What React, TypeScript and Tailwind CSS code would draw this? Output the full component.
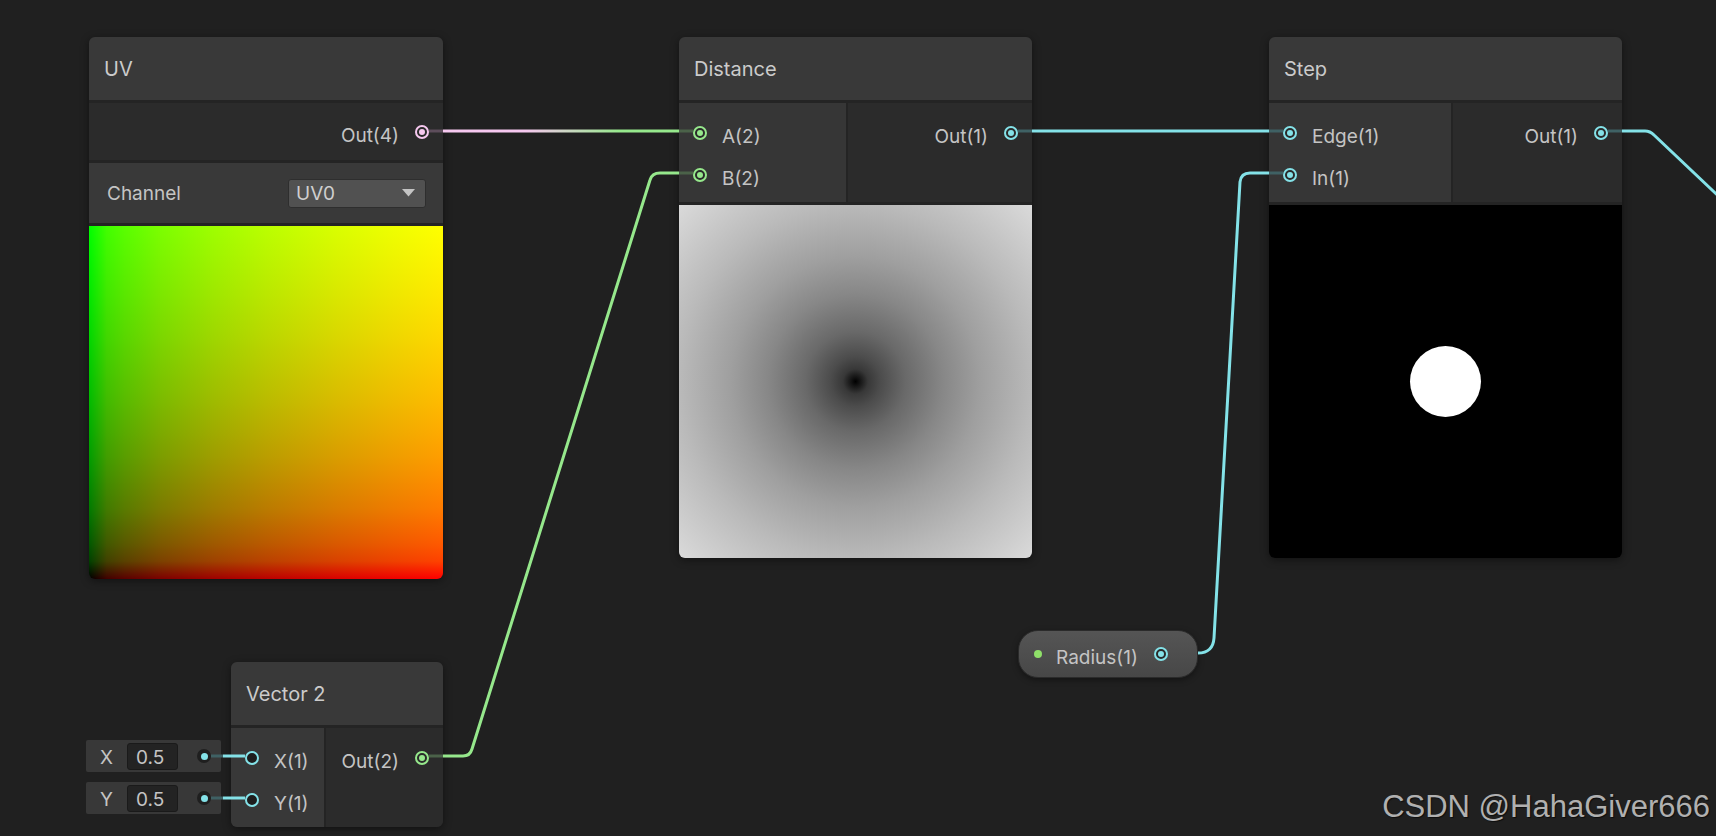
import React from "react";

const PINK = "#f6c8ef";
const GREEN = "#96e88c";
const CYAN = "#84e2e8";

type PortKind = "filled" | "hollow";

function Port({ color, kind = "filled" }: { color: "pink" | "green" | "cyan"; kind?: PortKind }) {
  const border =
    color === "pink" ? "border-[#f6c8ef]" : color === "green" ? "border-[#96e88c]" : "border-[#84e2e8]";
  const dot = color === "pink" ? "bg-[#f6c8ef]" : color === "green" ? "bg-[#96e88c]" : "bg-[#84e2e8]";
  return (
    <span
      className={`flex h-[14px] w-[14px] shrink-0 items-center justify-center rounded-full border-2 ${border} ${
        kind === "hollow" ? "bg-[#1e1e1e]" : "bg-[#2a2a2a]"
      }`}
    >
      {kind === "filled" && <span className={`h-[6px] w-[6px] rounded-full ${dot}`} />}
    </span>
  );
}

function InRow({ label, color, kind }: { label: string; color: "green" | "cyan"; kind?: PortKind }) {
  return (
    <div className="flex h-[42px] items-center gap-[15px] pl-[14px]">
      <Port color={color} kind={kind} />
      <span className="pt-[9px]">{label}</span>
    </div>
  );
}

function OutRow({ label, color }: { label: string; color: "pink" | "green" | "cyan" }) {
  return (
    <div className="flex h-[42px] items-center justify-end gap-[16px] pr-[14px]">
      <span className="pt-[9px]">{label}</span>
      <Port color={color} />
    </div>
  );
}

function Header({ title }: { title: string }) {
  return (
    <div className="flex h-[63px] items-center rounded-t-[6px] bg-[#393939] pl-[15px] text-[20px] text-[#cbcbcb]">
      {title}
    </div>
  );
}

function Field({ label }: { label: string }) {
  return (
    <div className="flex h-[32px] w-[135px] items-center rounded-[2px] bg-[#383838] text-[19px] text-[#c4c4c4]">
      <span className="w-[41px] pt-[5px] text-center">{label}</span>
      <span className="flex h-[27px] w-[51px] items-center rounded-[3px] border border-[#1a1a1a] bg-[#232323] pl-[8px] pt-[5px]">
        0.5
      </span>
      <span className="ml-auto mr-[10px] flex h-[14px] w-[14px] items-center justify-center rounded-full bg-[#1f1f1f]">
        <span className="h-[7px] w-[7px] rounded-full bg-[#84e2e8]" />
      </span>
    </div>
  );
}

export default function App() {
  return (
    <div className="relative h-[836px] w-[1716px] overflow-hidden bg-[#202020] font-['Inter','Noto_Sans',sans-serif] text-[19px] text-[#c4c4c4]">
      {/* UV node */}
      <div className="absolute left-[89px] top-[37px] flex w-[354px] flex-col gap-[3px] rounded-[6px] bg-[#242424] shadow-[0_2px_8px_rgba(0,0,0,0.45)]">
        <Header title="UV" />
        <div className="flex h-[57px] items-center justify-end gap-[16px] bg-[#2b2b2b] pr-[14px]">
          <span className="pt-[9px]">Out(4)</span>
          <Port color="pink" />
        </div>
        <div className="flex h-[60px] items-center justify-between bg-[#393939] pl-[18px] pr-[17px]">
          <span className="pt-[2px]">Channel</span>
          <div className="flex h-[29px] w-[138px] items-center justify-between rounded-[3px] border border-[#2e2e2e] bg-[#515151] pl-[7px] pr-[10px] text-[#cfcfcf]">
            <span className="pt-[2px]">UV0</span>
            <svg width="13" height="8" viewBox="0 0 13 8">
              <path d="M0 0 H13 L6.5 7.5 Z" fill="#c4c4c4" />
            </svg>
          </div>
        </div>
        <div className="h-[353px] rounded-b-[6px] bg-blend-screen bg-[image:linear-gradient(to_right,#000000_0%,#410000_5%,#590000_10%,#7b0000_20%,#9e0000_35%,#ba0000_50%,#d90000_70%,#ed0000_85%,#ff0000_100%),linear-gradient(to_top,#000000_0%,#004100_5%,#005900_10%,#007b00_20%,#009e00_35%,#00ba00_50%,#00d900_70%,#00ed00_85%,#00ff00_100%)]" />
      </div>

      {/* Distance node */}
      <div className="absolute left-[679px] top-[37px] flex w-[353px] flex-col gap-[3px] rounded-[6px] bg-[#242424] shadow-[0_2px_8px_rgba(0,0,0,0.45)]">
        <Header title="Distance" />
        <div className="flex h-[99px] gap-[2px]">
          <div className="flex w-[167px] flex-col bg-[#363636] pt-[9px]">
            <InRow label="A(2)" color="green" />
            <InRow label="B(2)" color="green" />
          </div>
          <div className="flex flex-1 flex-col bg-[#2b2b2b] pt-[9px]">
            <OutRow label="Out(1)" color="cyan" />
          </div>
        </div>
        <div className="h-[353px] rounded-b-[6px] bg-[radial-gradient(circle_farthest-corner_at_center,#000000_0%,#383838_5%,#4c4c4c_10%,#696969_20%,#878787_35%,#9f9f9f_50%,#bababa_71%,#dadada_100%)]" />
      </div>

      {/* Step node */}
      <div className="absolute left-[1269px] top-[37px] flex w-[353px] flex-col gap-[3px] rounded-[6px] bg-[#242424] shadow-[0_2px_8px_rgba(0,0,0,0.45)]">
        <Header title="Step" />
        <div className="flex h-[99px] gap-[2px]">
          <div className="flex w-[182px] flex-col bg-[#363636] pt-[9px]">
            <InRow label="Edge(1)" color="cyan" />
            <InRow label="In(1)" color="cyan" />
          </div>
          <div className="flex flex-1 flex-col bg-[#2b2b2b] pt-[9px]">
            <OutRow label="Out(1)" color="cyan" />
          </div>
        </div>
        <div className="flex h-[353px] items-center justify-center rounded-b-[6px] bg-black">
          <div className="h-[71px] w-[71px] rounded-full bg-white" />
        </div>
      </div>

      {/* Vector 2 node */}
      <div className="absolute left-[231px] top-[662px] flex w-[212px] flex-col gap-[3px] rounded-[6px] bg-[#242424] shadow-[0_2px_8px_rgba(0,0,0,0.45)]">
        <Header title="Vector 2" />
        <div className="flex h-[99px] gap-[2px] overflow-hidden rounded-b-[6px]">
          <div className="flex w-[93px] flex-col bg-[#383838] pt-[9px]">
            <InRow label="X(1)" color="cyan" kind="hollow" />
            <InRow label="Y(1)" color="cyan" kind="hollow" />
          </div>
          <div className="flex flex-1 flex-col bg-[#2b2b2b] pt-[9px]">
            <OutRow label="Out(2)" color="green" />
          </div>
        </div>
      </div>

      {/* Inline fields */}
      <div className="absolute left-[86px] top-[740px] flex flex-col gap-[10px]">
        <Field label="X" />
        <Field label="Y" />
      </div>

      {/* Radius property node */}
      <div className="absolute left-[1018px] top-[630px] flex h-[48px] w-[180px] items-center rounded-[20px] border border-[#2b2b2b] bg-[linear-gradient(to_bottom,#555555,#474747)] pl-[15px] shadow-[0_2px_6px_rgba(0,0,0,0.4)]">
        <span className="h-[8px] w-[8px] rounded-full bg-[#8fe069]" />
        <span className="ml-[14px] pt-[9px]">Radius(1)</span>
        <span className="ml-auto mr-[29px]">
          <Port color="cyan" />
        </span>
      </div>

      {/* Wires */}
      <svg className="pointer-events-none absolute inset-0" width="1716" height="836" viewBox="0 0 1716 836" fill="none">
        <defs>
          <linearGradient id="pg" gradientUnits="userSpaceOnUse" x1="443" y1="0" x2="679" y2="0">
            <stop offset="0" stopColor={PINK} />
            <stop offset="0.35" stopColor={PINK} />
            <stop offset="0.75" stopColor={GREEN} />
            <stop offset="1" stopColor={GREEN} />
          </linearGradient>
        </defs>
        {/* stubs */}
        <g strokeWidth="3">
          <path d="M429 131 H443" stroke="#5d4d5b" />
          <path d="M679 131 H693" stroke="#4b6249" />
          <path d="M679 173 H693" stroke="#4b6249" />
          <path d="M1018 131 H1032" stroke="#3f6164" />
          <path d="M1269 131 H1283" stroke="#3f6164" />
          <path d="M1269 173 H1283" stroke="#3f6164" />
          <path d="M1608 131 H1622" stroke="#3f6164" />
          <path d="M429 756 H443" stroke="#4b6249" />
          <path d="M211 756 H223" stroke="#3f6164" />
          <path d="M211 798 H223" stroke="#3f6164" />
        </g>
        <g strokeWidth="3" strokeLinecap="butt" strokeLinejoin="round">
          <path d="M443 131 H679" stroke="url(#pg)" />
          <path d="M443 756 H463 Q470 756 472 749 L650 180 Q652 173 660 173 H679" stroke={GREEN} />
          <path d="M1032 131 H1269" stroke={CYAN} />
          <path d="M1198 653 Q1213 653 1214 638 L1240 182 Q1241 173 1250 173 H1269" stroke={CYAN} />
          <path d="M1622 131 H1645 Q1650 131 1654 135 L1730 207" stroke={CYAN} />
          <path d="M223 756 H245" stroke={CYAN} />
          <path d="M223 798 H245" stroke={CYAN} />
        </g>
      </svg>

      {/* Watermark */}
      <div className="absolute right-[6px] top-[791px] font-['Liberation_Sans','Arial',sans-serif] text-[31px] leading-none text-[#b0b0b0] [text-shadow:1px_1px_1px_rgba(0,0,0,0.6)]">
        CSDN @HahaGiver666
      </div>
    </div>
  );
}
